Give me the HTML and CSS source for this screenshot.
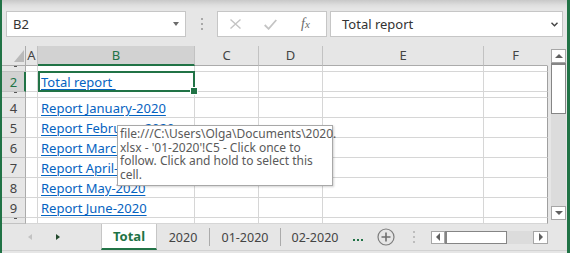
FILE: index.html
```html
<!DOCTYPE html>
<html>
<head>
<meta charset="utf-8">
<title>Excel</title>
<link rel="stylesheet" href="styles.css">
</head>
<body>
<div class="app">
  <div class="fbar">
    <div class="box namebox"><span>B2</span><span class="dd"></span></div>
    <div class="vdots"><i></i><i></i><i></i></div>
    <div class="box fxgroup">
      <svg class="ic-x" width="11" height="10" viewBox="0 0 11 10"><path d="M0.5 0.5 L10.5 9.5 M10.5 0.5 L0.5 9.5" stroke="#c4c4c4" stroke-width="1.4" fill="none"/></svg>
      <svg class="ic-check" width="13" height="11" viewBox="0 0 13 11"><path d="M0.7 6 L4.6 9.8 L12.3 1" stroke="#c4c4c4" stroke-width="1.8" fill="none"/></svg>
      <span class="fx"><i>f</i><i class="fxx">x</i></span>
    </div>
    <div class="box finput"><span>Total report</span>
      <svg class="chev" width="7" height="5" viewBox="0 0 7 5"><path d="M0.5 0.7 L3.5 3.8 L6.5 0.7" stroke="#444" stroke-width="1.4" fill="none"/></svg>
    </div>
  </div>

  <div class="sheetwrap">
    <div class="grid">
      <div class="corner"><span class="tri"></span></div>
      <div class="ch">A</div>
      <div class="ch sel">B</div>
      <div class="ch">C</div>
      <div class="ch">D</div>
      <div class="ch">E</div>
      <div class="ch">F</div>

      <div class="rh small"><span class="tick"></span></div>
      <div class="c"></div><div class="c"></div><div class="c"></div><div class="c"></div><div class="c"></div><div class="c"></div>

      <div class="rh sel">2</div>
      <div class="c"></div>
      <div class="c active"><span class="link">Total report&nbsp;</span></div>
      <div class="c"></div><div class="c"></div><div class="c"></div><div class="c"></div>

      <div class="rh small"><span class="tick"></span></div>
      <div class="c"></div><div class="c"></div><div class="c"></div><div class="c"></div><div class="c"></div><div class="c"></div>

      <div class="rh">4</div>
      <div class="c"></div>
      <div class="c"><span class="link">Report January-2020</span></div>
      <div class="c"></div><div class="c"></div><div class="c"></div><div class="c"></div>

      <div class="rh">5</div>
      <div class="c"></div>
      <div class="c"><span class="link">Report February-2020</span></div>
      <div class="c"></div><div class="c"></div><div class="c"></div><div class="c"></div>

      <div class="rh">6</div>
      <div class="c"></div>
      <div class="c"><span class="link">Report March-2020</span></div>
      <div class="c"></div><div class="c"></div><div class="c"></div><div class="c"></div>

      <div class="rh">7</div>
      <div class="c"></div>
      <div class="c"><span class="link">Report April-2020</span></div>
      <div class="c"></div><div class="c"></div><div class="c"></div><div class="c"></div>

      <div class="rh">8</div>
      <div class="c"></div>
      <div class="c"><span class="link">Report May-2020</span></div>
      <div class="c"></div><div class="c"></div><div class="c"></div><div class="c"></div>

      <div class="rh">9</div>
      <div class="c"></div>
      <div class="c"><span class="link">Report June-2020</span></div>
      <div class="c"></div><div class="c"></div><div class="c"></div><div class="c"></div>

      <div class="rh small"><span class="tick"></span></div>
      <div class="c"></div><div class="c"></div><div class="c"></div><div class="c"></div><div class="c"></div><div class="c"></div>
    </div>

    <div class="vscroll">
      <div class="vbtn"><span class="up"></span></div>
      <div class="vthumb"></div>
      <div class="vtrack"></div>
      <div class="vbtn"><span class="down"></span></div>
    </div>

    <div class="tooltip">file:///C:\Users\Olga\Documents\2020.<br>xlsx - '01-2020'!C5 - Click once to<br>follow. Click and hold to select this<br>cell.</div>
  </div>

  <div class="tabbar">
    <div class="nav"><span class="navl"></span><span class="navr"></span></div>
    <div class="tab active">Total</div>
    <div class="tab t2020">2020</div>
    <span class="tsep"></span>
    <div class="tab t01">01-2020</div>
    <span class="tsep"></span>
    <div class="tab t02">02-2020</div>
    <div class="more"><i></i><i></i><i></i></div>
    <div class="add">
      <svg width="18" height="18" viewBox="0 0 18 18"><circle cx="9" cy="9" r="8" stroke="#7d7d7d" stroke-width="1.2" fill="none"/><path d="M9 4.5 V13.5 M4.5 9 H13.5" stroke="#6f6f6f" stroke-width="1.6"/></svg>
    </div>
    <div class="sdots"><i></i><i></i><i></i></div>
    <div class="hscroll">
      <div class="hbtn"><span class="left"></span></div>
      <div class="hthumb"></div>
      <div class="htrack"></div>
      <div class="hbtn hbtnr"><span class="right"></span></div>
    </div>
  </div>
  <div class="status"></div>
</div>
</body>
</html>
```

FILE: styles.css
```css
* { box-sizing: border-box; }

body {
  margin: 0;
  width: 570px;
  height: 253px;
  overflow: hidden;
  background: #e6e6e6;
  font-family: "Noto Sans", sans-serif;
}

.app {
  height: 253px;
  border-left: 2px solid #217346;
  border-right: 3px solid #217346;
  display: flex;
  flex-direction: column;
}

/* ---------- formula bar ---------- */
.fbar {
  height: 46px;
  flex: none;
  display: flex;
  align-items: flex-start;
  padding: 11px 0 0 4px;
  background: linear-gradient(#c8c8c8 0, #dedede 5px, #e6e6e6 9px);
}

.box {
  height: 26px;
  background: #fff;
  border: 1px solid #c6c6c6;
  display: flex;
  align-items: center;
  flex: none;
}

.namebox {
  width: 180px;
  padding: 0 6px;
  font-size: 13px;
  color: #333;
}

.dd {
  margin-left: auto;
  width: 0;
  height: 0;
  border-left: 3.5px solid transparent;
  border-right: 3.5px solid transparent;
  border-top: 4px solid #6b6b6b;
}

.vdots {
  width: 31px;
  height: 26px;
  flex: none;
  display: flex;
  flex-direction: column;
  align-items: center;
  justify-content: center;
  gap: 3px;
}
.vdots i, .sdots i {
  display: block;
  width: 2px;
  height: 2px;
  background: #a8a8a8;
}

.fxgroup {
  width: 110px;
  padding-left: 12px;
}
.ic-check { margin-left: 23px; }
.fx {
  margin-left: 24px;
  font-family: "Liberation Serif", serif;
  font-size: 14px;
  color: #6a6a6a;
}
.fx .fxx { font-size: 11px; }

.finput {
  width: 233px;
  margin-left: 3px;
  padding: 0 4px 0 11px;
  font-size: 13px;
  color: #333;
}
.chev { margin-left: auto; }

/* ---------- sheet ---------- */
.sheetwrap {
  position: relative;
  height: 178px;
  flex: none;
  display: flex;
}

.grid {
  width: 546px;
  flex: none;
  display: grid;
  grid-template-columns: 24px 12px 157px 64px 64px 161px 64px;
  grid-template-rows: 20px 6px 20px 6px repeat(6, 20px) 6px;
  background: #fff;
  font-size: 13px;
}

.c {
  border-right: 1px solid #d6d6d6;
  border-bottom: 1px solid #d6d6d6;
  padding-left: 3px;
  line-height: 20px;
  white-space: nowrap;
  overflow: visible;
}
.grid > .c:nth-child(7n) { border-right-color: #9f9f9f; }

.link {
  color: #0563c1;
  text-decoration: underline;
  text-decoration-thickness: 1px;
  text-underline-offset: 2px;
}

.corner {
  background: #e6e6e6;
  border-right: 1px solid #ababab;
  border-bottom: 1px solid #ababab;
  display: flex;
  align-items: flex-end;
  justify-content: flex-end;
  padding: 0 1px 3px 0;
}
.tri {
  width: 0;
  height: 0;
  border-style: solid;
  border-width: 0 0 12px 10px;
  border-color: transparent transparent #b9b9b9 transparent;
}

.ch {
  background: #e6e6e6;
  border-right: 1px solid #c2c2c2;
  border-bottom: 1px solid #ababab;
  text-align: center;
  line-height: 19px;
  color: #444;
}
.grid > .ch:nth-child(7) { border-right-color: #e6e6e6; }
.ch.sel {
  background: #d2d2d2;
  border-bottom: 2px solid #217346;
  color: #217346;
}

.rh {
  background: #e6e6e6;
  border-right: 1px solid #ababab;
  border-bottom: 1px solid #c2c2c2;
  text-align: center;
  line-height: 20px;
  color: #444;
  position: relative;
}
.rh.sel {
  background: #d2d2d2;
  border-right: 2px solid #217346;
  color: #217346;
  padding-left: 1px;
}
.rh.small { overflow: hidden; }
.tick {
  position: absolute;
  left: 12px;
  top: 0;
  width: 3px;
  height: 1px;
  background: #555;
}

.c.active {
  position: relative;
  z-index: 2;
}
.c.active::before {
  content: "";
  position: absolute;
  top: -1px;
  left: 0;
  right: -1px;
  bottom: -1px;
  border: 2px solid #217346;
}
.c.active::after {
  content: "";
  position: absolute;
  right: -4px;
  bottom: -4px;
  width: 6px;
  height: 6px;
  background: #217346;
  border: 1px solid #fff;
}

/* vertical scrollbar */
.vscroll {
  width: 15px;
  height: 171px;
  margin: 3px 0 0 3px;
  flex: none;
  display: flex;
  flex-direction: column;
  background: #dcdcdc;
}
.vbtn {
  height: 14px;
  background: #fff;
  border: 1px solid #a6a6a6;
  display: flex;
  align-items: center;
  justify-content: center;
}
.vthumb {
  height: 51px;
  background: #fff;
  border: 1px solid #858585;
  border-top-width: 2px;
}
.vtrack { flex: 1; }
.up, .down {
  width: 0;
  height: 0;
  border-left: 4px solid transparent;
  border-right: 4px solid transparent;
}
.up { border-bottom: 4px solid #606060; }
.down { border-top: 4px solid #606060; }

/* tooltip */
.tooltip {
  position: absolute;
  left: 115px;
  top: 79px;
  width: 216px;
  height: 61px;
  background: #fff;
  border: 1px solid #a8a8a8;
  box-shadow: 1px 1px 2px rgba(0, 0, 0, 0.18);
  padding: 1px 2px;
  font-size: 12px;
  line-height: 13.5px;
  color: #5a5a5a;
  white-space: nowrap;
  z-index: 5;
}

/* ---------- tab bar ---------- */
.tabbar {
  height: 26px;
  flex: none;
  display: flex;
  align-items: stretch;
  font-size: 12.5px;
  color: #444;
}
.nav {
  width: 99px;
  flex: none;
  display: flex;
  align-items: center;
}
.navl {
  margin-left: 26px;
  width: 0;
  height: 0;
  border-right: 4px solid #c3c3c3;
  border-top: 3.5px solid transparent;
  border-bottom: 3.5px solid transparent;
}
.navr {
  margin-left: 24px;
  width: 0;
  height: 0;
  border-left: 4px solid #22492c;
  border-top: 3.5px solid transparent;
  border-bottom: 3.5px solid transparent;
}
.tab {
  flex: none;
  display: flex;
  align-items: center;
  justify-content: center;
}
.tab.active {
  width: 56px;
  background: #fff;
  border-left: 1px solid #c6c6c6;
  border-right: 1px solid #c6c6c6;
  border-bottom: 2px solid #217346;
  color: #217346;
  font-weight: 700;
  font-size: 13px;
}
.t2020 { width: 52px; }
.t01 { width: 70px; }
.t02 { width: 68px; }
.tsep {
  flex: none;
  align-self: center;
  width: 1px;
  height: 18px;
  background: #ababab;
}
.more {
  width: 18px;
  flex: none;
  display: flex;
  align-items: center;
  justify-content: center;
  gap: 2px;
  padding-top: 6px;
}
.more i {
  display: block;
  width: 2px;
  height: 2px;
  background: #217346;
}
.add {
  margin-left: 10px;
  width: 18px;
  flex: none;
  display: flex;
  align-items: center;
}
.add svg { display: block; }
.sdots {
  margin-left: 18px;
  width: 2px;
  flex: none;
  display: flex;
  flex-direction: column;
  justify-content: center;
  gap: 3px;
}
.sdots i { background: #bdbdbd; }
.hscroll {
  margin-left: 16px;
  width: 117px;
  height: 13px;
  align-self: center;
  flex: none;
  display: flex;
  background: #dcdcdc;
}
.hbtn {
  width: 14px;
  background: #fff;
  border: 1px solid #a6a6a6;
  display: flex;
  align-items: center;
  justify-content: center;
}
.hbtnr { width: 15px; }
.hthumb {
  width: 62px;
  background: #fff;
  border: 1px solid #858585;
  border-left-width: 2px;
}
.htrack { flex: 1; }
.left, .right {
  width: 0;
  height: 0;
  border-top: 4px solid transparent;
  border-bottom: 4px solid transparent;
}
.left { border-right: 4px solid #606060; }
.right { border-left: 4px solid #606060; }

.status {
  flex: 1;
  background: #e6e6e6;
  border-top: 1px solid #d2d2d2;
}
```
